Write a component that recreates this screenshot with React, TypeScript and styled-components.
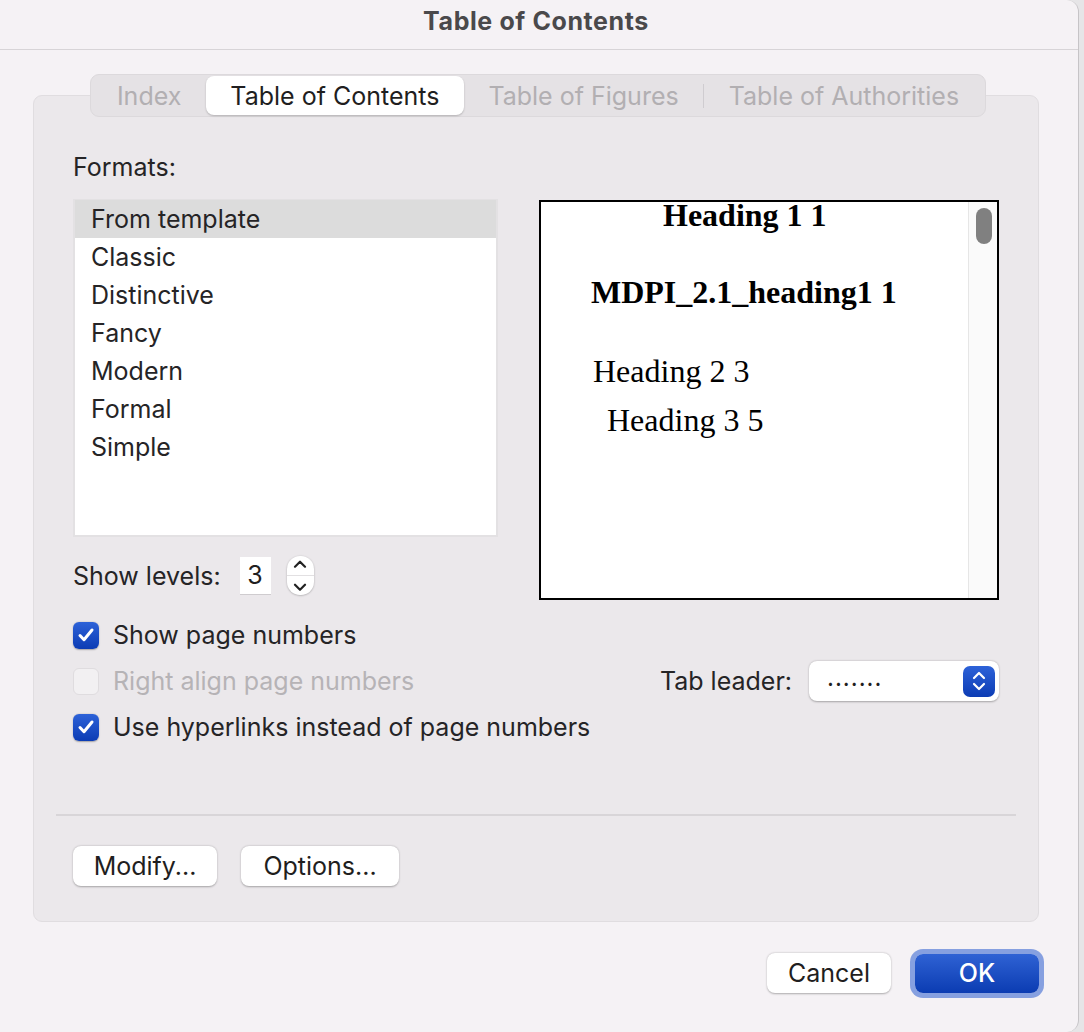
import React from "react";
import styled, { createGlobalStyle } from "styled-components";

const GlobalStyle = createGlobalStyle`
  html, body {
    margin: 0;
    padding: 0;
    background: #e6e5e7;
    font-family: Inter, "Noto Sans", "Liberation Sans", sans-serif;
    -webkit-font-smoothing: antialiased;
  }
`;

const Window = styled.div`
  width: 1079px;
  height: 1032px;
  box-sizing: border-box;
  background: #f5f2f5;
  border-right: 1px solid #c6c4c7;
  border-radius: 0 12px 12px 0;
  display: flex;
  flex-direction: column;
  overflow: hidden;
`;

const TitleBar = styled.div`
  height: 50px;
  box-sizing: border-box;
  flex-shrink: 0;
  border-bottom: 1px solid #d7d4d7;
  display: flex;
  align-items: center;
  justify-content: center;
  padding: 0 6px 8px 0;
  font-size: 25px;
  font-weight: 700;
  color: #4a494b;
  letter-spacing: 0.6px;
`;

const Body = styled.div`
  padding: 24px 39px 0 33px;
  display: flex;
  flex-direction: column;
`;

const TabBar = styled.div`
  align-self: center;
  position: relative;
  z-index: 1;
  margin-bottom: -22px;
  display: flex;
  align-items: center;
  height: 43px;
  box-sizing: border-box;
  padding: 0 1px;
  background: #e5e2e5;
  border: 1px solid #dcd9dc;
  border-radius: 9px;
  margin-left: 4px;
`;

const Tab = styled.div<{ $active?: boolean }>`
  height: 39px;
  display: flex;
  align-items: center;
  padding: 0 24.5px;
  font-size: 25px;
  color: ${(p) => (p.$active ? "#1f1e20" : "#b2afb2")};
  background: ${(p) => (p.$active ? "#ffffff" : "transparent")};
  border-radius: 8px;
  box-shadow: ${(p) => (p.$active ? "0 1px 2px rgba(0,0,0,0.22)" : "none")};
`;

const TabSep = styled.div`
  width: 1px;
  height: 24px;
  background: #cfccd0;
`;

const Group = styled.div`
  background: #ebe8eb;
  border: 1px solid #e0dde0;
  border-radius: 9px;
  padding: 54px 39px 35px 39px;
  display: flex;
  flex-direction: column;
`;

const TopRow = styled.div`
  display: flex;
  align-items: flex-start;
`;

const LeftCol = styled.div`
  width: 426px;
  display: flex;
  flex-direction: column;
`;

const Label = styled.div<{ $disabled?: boolean }>`
  font-size: 25px;
  line-height: 34px;
  color: ${(p) => (p.$disabled ? "#b6b3b6" : "#252426")};
  white-space: nowrap;
`;

const FormatList = styled.div`
  margin-top: 15px;
  height: 338px;
  box-sizing: border-box;
  background: #ffffff;
  border: 2px solid #e3e1e3;
  border-top-width: 1px;
`;

const ListItem = styled.div<{ $selected?: boolean }>`
  height: 38px;
  display: flex;
  align-items: center;
  padding-left: 16px;
  font-size: 25px;
  color: #252426;
  background: ${(p) => (p.$selected ? "#dcdcdc" : "transparent")};
`;

const LevelsRow = styled.div`
  margin-top: 18px;
  display: flex;
  align-items: center;
  height: 41px;
`;

const LevelInput = styled.div`
  margin-left: 19px;
  width: 31px;
  height: 38px;
  box-sizing: border-box;
  background: #ffffff;
  border-bottom: 1px solid #cfcccf;
  display: flex;
  align-items: center;
  justify-content: center;
  font-size: 25px;
  color: #1f1e20;
`;

const Stepper = styled.div`
  margin-left: 16px;
  width: 27px;
  height: 39px;
  border-radius: 13px;
  background: #ffffff;
  box-shadow: 0 0.5px 2px rgba(0, 0, 0, 0.3);
  display: flex;
  flex-direction: column;
  align-items: center;
  justify-content: space-between;
  padding: 4px 0;
  box-sizing: border-box;
`;

const StepperLine = styled.div`
  width: 100%;
  height: 1px;
  background: #e2e0e2;
`;

const RightCol = styled.div`
  margin-left: 41px;
  padding-top: 50px;
`;

const Preview = styled.div`
  width: 460px;
  height: 400px;
  box-sizing: border-box;
  border: 2px solid #000000;
  background: #ffffff;
  display: flex;
`;

const PreviewContent = styled.div`
  flex: 1;
  overflow: hidden;
  font-family: "Liberation Serif", "Times New Roman", serif;
  color: #000000;
`;

const PreviewLine = styled.div<{ $bold?: boolean; $indent: number; $gap: number }>`
  font-size: 32px;
  line-height: 32px;
  white-space: nowrap;
  font-weight: ${(p) => (p.$bold ? 700 : 400)};
  padding-left: ${(p) => p.$indent}px;
  margin-top: ${(p) => p.$gap}px;
`;

const ScrollTrack = styled.div`
  width: 29px;
  background: #fafafa;
  border-left: 1px solid #e6e6e6;
  display: flex;
  justify-content: center;
  padding-top: 6px;
  box-sizing: border-box;
`;

const ScrollThumb = styled.div`
  width: 16px;
  height: 36px;
  border-radius: 8px;
  background: #808080;
  margin-left: 2px;
`;

const OptionRow = styled.div<{ $first?: boolean }>`
  height: 46px;
  margin-top: ${(p) => (p.$first ? "12px" : "0")};
  display: flex;
  align-items: center;
`;

const CheckBox = styled.div<{ $checked?: boolean; $disabled?: boolean }>`
  width: 26px;
  height: 27px;
  box-sizing: border-box;
  border-radius: 6px;
  margin-right: 14px;
  flex-shrink: 0;
  display: flex;
  align-items: center;
  justify-content: center;
  background: ${(p) =>
    p.$checked ? "linear-gradient(#2d62d8, #0c3cb4)" : p.$disabled ? "#f2f0f2" : "#ffffff"};
  border: ${(p) => (p.$checked ? "none" : "1px solid #dfdcdf")};
  box-shadow: ${(p) => (p.$checked ? "0 0.5px 1.5px rgba(0,0,0,0.3)" : "none")};
`;

const Spacer = styled.div`
  flex: 1;
`;

const LeaderSelect = styled.div`
  margin-left: 17px;
  width: 190px;
  height: 40px;
  box-sizing: border-box;
  background: #ffffff;
  border-radius: 8px;
  box-shadow: 0 0.5px 2px rgba(0, 0, 0, 0.3);
  display: flex;
  align-items: center;
  padding: 0 4px 0 18px;
  font-size: 24px;
  color: #1f1e20;
`;

const LeaderValue = styled.div`
  flex: 1;
  letter-spacing: 1px;
  margin-top: -8px;
`;

const LeaderButton = styled.div`
  width: 32px;
  height: 31px;
  border-radius: 7px;
  background: linear-gradient(#2d62d8, #0c3cb4);
  display: flex;
  align-items: center;
  justify-content: center;
`;

const Divider = styled.div`
  margin: 64px -17px 0 -17px;
  height: 2px;
  background: #d8d5d8;
`;

const ButtonRow = styled.div<{ $end?: boolean; $top: number }>`
  display: flex;
  gap: 24px;
  align-items: center;
  margin-top: ${(p) => p.$top}px;
  justify-content: ${(p) => (p.$end ? "flex-end" : "flex-start")};
`;

const PushButton = styled.div<{ $w: number }>`
  width: ${(p) => p.$w}px;
  height: 40px;
  border-radius: 8px;
  background: #ffffff;
  box-shadow: 0 0.5px 2px rgba(0, 0, 0, 0.3);
  display: flex;
  align-items: center;
  justify-content: center;
  font-size: 25px;
  color: #1f1e20;
`;

const DefaultButton = styled.div`
  width: 124px;
  height: 39px;
  border-radius: 8px;
  background: linear-gradient(#2f62d4, #0b3cb2);
  box-shadow: 0 0 0 5px rgba(60, 105, 210, 0.6);
  display: flex;
  align-items: center;
  justify-content: center;
  font-size: 25px;
  color: #ffffff;
  font-weight: 500;
`;

const Check = () => (
  <svg width="20" height="20" viewBox="0 0 20 20">
    <path d="M4 10.5l4 4.2L16 5" fill="none" stroke="#fff" strokeWidth="3" strokeLinecap="round" strokeLinejoin="round" />
  </svg>
);

const Chevron = ({ up, color, size = 14 }: { up?: boolean; color: string; size?: number }) => (
  <svg width={size} height={size * 0.6} viewBox="0 0 14 8">
    <path
      d={up ? "M2 6.5L7 1.5L12 6.5" : "M2 1.5L7 6.5L12 1.5"}
      fill="none"
      stroke={color}
      strokeWidth="2.2"
      strokeLinecap="round"
      strokeLinejoin="round"
    />
  </svg>
);

const formats = ["From template", "Classic", "Distinctive", "Fancy", "Modern", "Formal", "Simple"];

export default function App() {
  return (
    <>
      <GlobalStyle />
      <Window>
        <TitleBar>Table of Contents</TitleBar>
        <Body>
          <TabBar>
            <Tab>Index</Tab>
            <Tab $active>Table of Contents</Tab>
            <Tab>Table of Figures</Tab>
            <TabSep />
            <Tab>Table of Authorities</Tab>
          </TabBar>
          <Group>
            <TopRow>
              <LeftCol>
                <Label>Formats:</Label>
                <FormatList>
                  {formats.map((f, i) => (
                    <ListItem key={f} $selected={i === 0}>
                      {f}
                    </ListItem>
                  ))}
                </FormatList>
                <LevelsRow>
                  <Label>Show levels:</Label>
                  <LevelInput>3</LevelInput>
                  <Stepper>
                    <Chevron up color="#222" />
                    <StepperLine />
                    <Chevron color="#222" />
                  </Stepper>
                </LevelsRow>
              </LeftCol>
              <RightCol>
                <Preview>
                  <PreviewContent>
                    <PreviewLine $bold $indent={122} $gap={-3}>
                      Heading 1 1
                    </PreviewLine>
                    <PreviewLine $bold $indent={50} $gap={45}>
                      MDPI_2.1_heading1 1
                    </PreviewLine>
                    <PreviewLine $indent={52} $gap={47}>
                      Heading 2 3
                    </PreviewLine>
                    <PreviewLine $indent={66} $gap={17}>
                      Heading 3 5
                    </PreviewLine>
                  </PreviewContent>
                  <ScrollTrack>
                    <ScrollThumb />
                  </ScrollTrack>
                </Preview>
              </RightCol>
            </TopRow>

            <OptionRow $first>
              <CheckBox $checked>
                <Check />
              </CheckBox>
              <Label>Show page numbers</Label>
            </OptionRow>
            <OptionRow>
              <CheckBox $disabled />
              <Label $disabled>Right align page numbers</Label>
              <Spacer />
              <Label>Tab leader:</Label>
              <LeaderSelect>
                <LeaderValue>.......</LeaderValue>
                <LeaderButton>
                  <svg width="16" height="22" viewBox="0 0 16 22">
                    <path d="M3 8L8 3L13 8" fill="none" stroke="#fff" strokeWidth="2.2" strokeLinecap="round" strokeLinejoin="round" />
                    <path d="M3 14L8 19L13 14" fill="none" stroke="#fff" strokeWidth="2.2" strokeLinecap="round" strokeLinejoin="round" />
                  </svg>
                </LeaderButton>
              </LeaderSelect>
            </OptionRow>
            <OptionRow>
              <CheckBox $checked>
                <Check />
              </CheckBox>
              <Label>Use hyperlinks instead of page numbers</Label>
            </OptionRow>

            <Divider />

            <ButtonRow $top={30}>
              <PushButton $w={144}>Modify...</PushButton>
              <PushButton $w={158}>Options...</PushButton>
            </ButtonRow>
          </Group>
          <ButtonRow $end $top={31}>
            <PushButton $w={124}>Cancel</PushButton>
            <DefaultButton>OK</DefaultButton>
          </ButtonRow>
        </Body>
      </Window>
    </>
  );
}
